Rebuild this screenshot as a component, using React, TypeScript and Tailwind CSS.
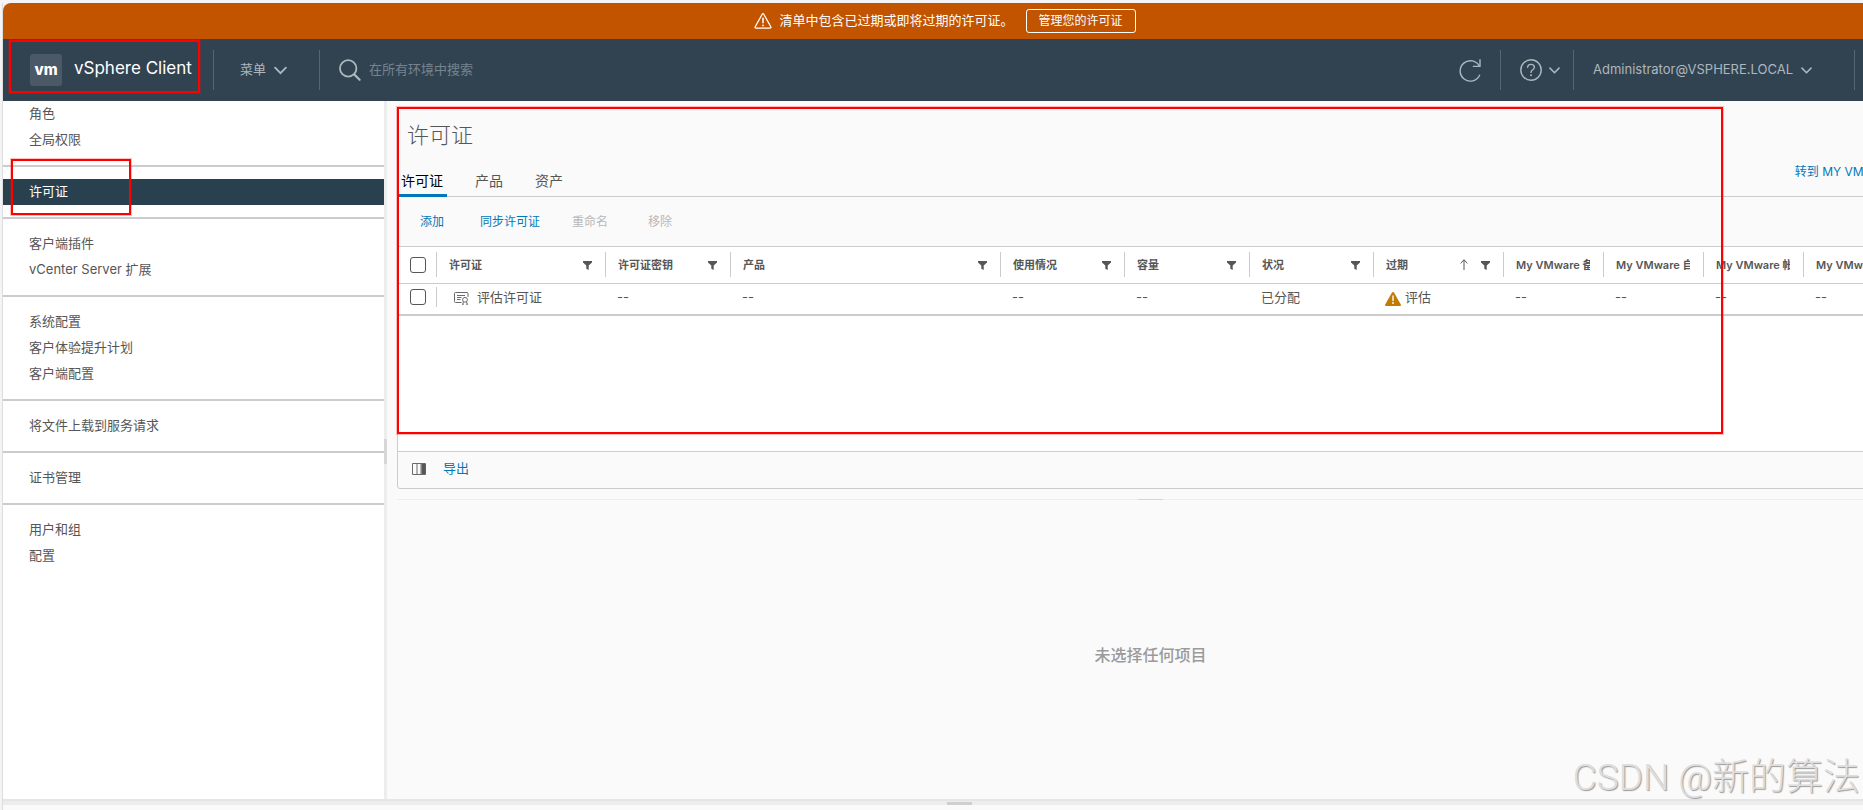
import React from "react";

const navGroups: { label: string; selected?: boolean }[][] = [
  [{ label: "角色" }, { label: "全局权限" }],
  [{ label: "许可证", selected: true }],
  [{ label: "客户端插件" }, { label: "vCenter Server 扩展" }],
  [{ label: "系统配置" }, { label: "客户体验提升计划" }, { label: "客户端配置" }],
  [{ label: "将文件上载到服务请求" }],
  [{ label: "证书管理" }],
  [{ label: "用户和组" }, { label: "配置" }],
];

const columns: { label: string; width: string; filter?: boolean; sorted?: boolean }[] = [
  { label: "许可证", width: "w-[169px]", filter: true },
  { label: "许可证密钥", width: "w-[125px]", filter: true },
  { label: "产品", width: "w-auto", filter: true },
  { label: "使用情况", width: "w-[124px]", filter: true },
  { label: "容量", width: "w-[125px]", filter: true },
  { label: "状况", width: "w-[124px]", filter: true },
  { label: "过期", width: "w-[130px]", filter: true, sorted: true },
  { label: "My VMware 备注", width: "w-[100px]" },
  { label: "My VMware 自定义标签", width: "w-[100px]" },
  { label: "My VMware 帐户", width: "w-[100px]" },
  { label: "My VMware", width: "w-[100px]" },
];

function Chevron({ className }: { className: string }) {
  return (
    <svg viewBox="0 0 14 9" className={className} fill="none" stroke="currentColor" strokeWidth="2" strokeLinecap="round" aria-hidden="true">
      <path d="M1.2 1.5 7 7.3l5.8-5.8" />
    </svg>
  );
}

function FilterIcon() {
  return (
    <svg viewBox="0 0 9 9" className="mt-0.5 h-[9px] w-[9px] fill-[#565656]" aria-hidden="true">
      <path d="M0 0h9v1.4L5.7 4.6V9L3.3 7.8V4.6L0 1.4z" />
    </svg>
  );
}

function WarningOutline() {
  return (
    <svg viewBox="0 0 18 16" className="h-4 w-[18px]" fill="none" stroke="currentColor" strokeWidth="1.3" strokeLinejoin="round" aria-hidden="true">
      <path d="M8.2 1.2a.9.9 0 0 1 1.6 0l7 12.6a.9.9 0 0 1-.8 1.4H2a.9.9 0 0 1-.8-1.4z" />
      <path d="M9 5.2v4.6" strokeWidth="1.5" strokeLinecap="round" />
      <circle cx="9" cy="12.4" r=".9" fill="currentColor" stroke="none" />
    </svg>
  );
}

function CheckBox({ label }: { label: string }) {
  return (
    <input
      type="checkbox"
      aria-label={label}
      className="block h-4 w-4 appearance-none rounded-[3px] border border-[#565656] bg-white checked:bg-[#0079b8]"
    />
  );
}

function Divider() {
  return <span className="h-10 w-px shrink-0 bg-[#566572]" />;
}

function Banner() {
  return (
    <div role="alert" className="flex h-9 shrink-0 items-center justify-center rounded-tl-lg bg-[#c25400] pl-6 text-white">
      <WarningOutline />
      <span className="ml-[7px] whitespace-nowrap pb-0.5 text-[13px] leading-5">清单中包含已过期或即将过期的许可证。</span>
      <button type="button" className="ml-3 h-6 whitespace-nowrap rounded-[3px] border border-white px-3 text-xs leading-5">
        管理您的许可证
      </button>
    </div>
  );
}

function Header() {
  return (
    <header className="flex h-[62px] shrink-0 items-center bg-[#314351] pr-2 text-[#adb7be]">
      <a href="#home" className="flex w-[210px] shrink-0 items-center gap-3 pl-[27px] text-white">
        <span className="flex h-8 w-8 items-center justify-center rounded-[3px] bg-[#4b5966] pb-0.5 text-[15px] leading-none font-extrabold">vm</span>
        <span className="whitespace-nowrap pb-0.5 text-[17px]">vSphere Client</span>
      </a>
      <Divider />
      <button type="button" className="flex w-[105px] shrink-0 items-center gap-2 pl-[26px] text-[13px]">
        菜单
        <Chevron className="h-[9px] w-[13px]" />
      </button>
      <Divider />
      <label className="flex min-w-0 flex-1 items-center gap-2 pl-[19px]">
        <svg viewBox="0 0 22 22" className="h-[22px] w-[22px] shrink-0" fill="none" stroke="currentColor" strokeWidth="1.8" strokeLinecap="round" aria-hidden="true">
          <circle cx="9.2" cy="9.4" r="8.2" />
          <path d="m15.2 15.4 5.4 5.4" strokeWidth="2.2" />
        </svg>
        <input
          type="search"
          aria-label="搜索"
          placeholder="在所有环境中搜索"
          className="w-full max-w-96 bg-transparent text-[13px] outline-none placeholder:text-[#768490]"
        />
      </label>
      <button type="button" aria-label="刷新" className="mr-[19px] shrink-0">
        <svg viewBox="0 0 22 23" className="h-[23px] w-[22px]" fill="none" stroke="currentColor" strokeWidth="1.4" strokeLinecap="round" strokeLinejoin="round" aria-hidden="true">
          <path d="M20.6 16.2A10.2 10.2 0 1 1 20.4 7.2" />
          <path d="M21 .8v6.6h-6.6" />
        </svg>
      </button>
      <Divider />
      <button type="button" aria-label="帮助" className="flex w-[72px] shrink-0 items-center gap-[7px] pl-[19px]">
        <svg viewBox="0 0 22 22" className="h-[22px] w-[22px]" fill="none" stroke="currentColor" strokeWidth="1.4" strokeLinecap="round" aria-hidden="true">
          <circle cx="11" cy="11" r="10.2" />
          <path d="M7.6 8.2C7.8 6.4 9.2 5.4 11 5.4c2 0 3.4 1.2 3.4 2.8 0 2.6-3.4 2.4-3.4 5.2" />
          <circle cx="11" cy="16.3" r="1" fill="currentColor" stroke="none" />
        </svg>
        <Chevron className="h-[7px] w-[11px]" />
      </button>
      <Divider />
      <button type="button" className="flex w-[280px] shrink-0 items-center gap-2 whitespace-nowrap pl-[19px] text-[13px]">
        Administrator@VSPHERE.LOCAL
        <Chevron className="h-[7px] w-[11px]" />
      </button>
      <Divider />
    </header>
  );
}

function Sidebar() {
  return (
    <nav aria-label="系统管理" className="w-[381px] shrink-0 bg-white text-[13px] leading-6 text-[#565656]">
      {navGroups.map((group, i) => (
        <ul key={i} className={i === 0 ? "pb-3" : "border-t-2 border-[#cccccc] py-3"}>
          {group.map((item) => (
            <li key={item.label}>
              <a
                href="#nav"
                aria-current={item.selected ? "page" : undefined}
                className={item.selected ? "block h-[26px] bg-[#29404e] pl-[26px] text-white" : "block h-[26px] pl-[26px]"}
              >
                {item.label}
              </a>
            </li>
          ))}
        </ul>
      ))}
    </nav>
  );
}

function LicenseTable() {
  return (
    <table className="w-full table-fixed border-collapse text-left">
      <thead>
        <tr className="h-9 border-b border-[#cccccc]">
          <th scope="col" className="w-[38px] p-0 pl-3">
            <CheckBox label="全选" />
          </th>
          {columns.map((c) => (
            <th key={c.label} scope="col" className={`${c.width} p-0 text-[11px] leading-4 font-semibold`}>
              <div className="flex h-[25px] items-center border-l border-[#cccccc] pl-3 pr-[13px]">
                <span className="flex-1 overflow-hidden whitespace-nowrap">{c.label}</span>
                {c.sorted && (
                  <svg viewBox="0 0 8 11" className="mr-[13px] h-[11px] w-2" fill="none" stroke="#565656" strokeWidth="1" aria-hidden="true">
                    <path d="M4 11V.8M.6 4.4 4 .8l3.4 3.6" />
                  </svg>
                )}
                {c.filter && (
                  <button type="button" aria-label={`筛选${c.label}`}>
                    <FilterIcon />
                  </button>
                )}
              </div>
            </th>
          ))}
        </tr>
      </thead>
      <tbody>
        <tr className="h-8 border-b-2 border-[#cccccc] text-[13px] leading-5">
          <td className="p-0 pb-1 pl-3">
            <CheckBox label="选择评估许可证" />
          </td>
          <td className="p-0 pb-1">
            <div className="flex h-5 items-center gap-2 border-l border-[#cccccc] pl-[17px]">
              <svg viewBox="0 0 15 13" className="mt-1 h-[13px] w-[15px]" fill="none" stroke="#6a6a6a" strokeWidth="1" aria-hidden="true">
                <path d="M7.5 10.5H1.5a1 1 0 0 1-1-1v-8a1 1 0 0 1 1-1h11.5a1 1 0 0 1 1 1V5M3 3.5h8M3 5.5h4.5M3 7.5h3.5" />
                <circle cx="11" cy="7.8" r="2.4" />
                <path d="m9.5 9.8-1 2.7 1.4-.4M12.5 9.8l1 2.7-1.4-.4" />
              </svg>
              评估许可证
            </div>
          </td>
          <td className="p-0 pb-1 pl-3">--</td>
          <td className="p-0 pb-1 pl-3">--</td>
          <td className="p-0 pb-1 pl-3">--</td>
          <td className="p-0 pb-1 pl-3">--</td>
          <td className="p-0 pb-1 pl-3">已分配</td>
          <td className="p-0 pb-1 pl-3">
            <div className="flex items-center gap-1">
              <svg viewBox="0 0 16 14" className="mt-1 h-[14px] w-4" aria-hidden="true">
                <path d="M7 .6a1.15 1.15 0 0 1 2 0l6.8 11.8A1.05 1.05 0 0 1 14.9 14H1.1a1.05 1.05 0 0 1-.9-1.6z" fill="#c27b00" />
                <path d="M8 4v4.5" stroke="#fff" strokeWidth="1.4" strokeLinecap="round" />
                <circle cx="8" cy="11" r=".9" fill="#fff" />
              </svg>
              评估
            </div>
          </td>
          <td className="p-0 pb-1 pl-3">--</td>
          <td className="p-0 pb-1 pl-3">--</td>
          <td className="p-0 pb-1 pl-3">--</td>
          <td className="p-0 pb-1 pl-3">--</td>
        </tr>
      </tbody>
    </table>
  );
}

function Licenses() {
  return (
    <main className="min-w-0 flex-1 overflow-hidden bg-[#fafafa] text-[#565656]">
      <div className="-mr-[41px] flex h-full flex-col pl-[10px]">
        <div className="flex items-center justify-between border-b border-[#cccccc]">
          <div className="-mb-px pt-[18px]">
            <h1 className="pl-[10px] text-[22px] leading-8 font-light">许可证</h1>
            <div role="tablist" className="mt-[10px] flex gap-6 text-sm leading-6">
              <button type="button" role="tab" aria-selected="true" className="h-9 border-b-[3px] border-[#0079b8] px-1 pt-[7px] text-black">许可证</button>
              <button type="button" role="tab" aria-selected="false" className="h-9 border-b-[3px] border-transparent px-1 pt-[7px]">产品</button>
              <button type="button" role="tab" aria-selected="false" className="h-9 border-b-[3px] border-transparent px-1 pt-[7px]">资产</button>
            </div>
          </div>
          <a href="#my-vmware" className="mt-[46px] whitespace-nowrap pr-1.5 text-xs text-[#0079b8]">转到 MY VMWARE</a>
        </div>
        <div role="toolbar" aria-label="许可证操作" className="flex h-[49px] items-center gap-9 pl-[23px] text-xs text-[#0079b8]">
          <button type="button">添加</button>
          <button type="button">同步许可证</button>
          <button type="button" disabled className="-ml-1 text-[#b8b8b8]">重命名</button>
          <button type="button" disabled className="ml-1 text-[#b8b8b8]">移除</button>
        </div>
        <section className="shrink-0 rounded-b-[3px] border border-[#cccccc]">
          <div className="min-h-[204px] bg-white">
            <LicenseTable />
          </div>
          <footer className="flex h-[37px] items-center gap-[17px] border-t border-[#cccccc] pb-0.5 pl-[14px]">
            <button type="button" aria-label="显示列">
              <svg viewBox="0 0 14 12" className="h-3 w-[14px]" aria-hidden="true">
                <path d="M.5.5h13v11H.5zM5 .5v11M9 .5v11" fill="none" stroke="#6a6a6a" />
                <path d="M9.5 1h4v10h-4z" fill="#565656" />
              </svg>
            </button>
            <button type="button" className="text-[13px] text-[#0079b8]">导出</button>
          </footer>
        </section>
        <div className="mt-[10px] flex h-px shrink-0 justify-center bg-[#eeeeee]">
          <span className="w-[25px] bg-[#d6d6d6]" />
        </div>
        <section className="flex min-h-20 flex-1 items-center justify-center pb-0.5 pt-3">
          <p className="text-base font-medium text-[#9a9a9a]">未选择任何项目</p>
        </section>
      </div>
    </main>
  );
}

export default function App() {
  return (
    <div className="relative flex min-h-screen flex-col overflow-hidden bg-[#f4f4f6] pl-0.5 pt-[3px] font-['Inter','Noto_Sans_CJK_SC',sans-serif]">
      <div className="flex flex-1 flex-col border-l border-[#dddddd]">
        <Banner />
        <Header />
        <div className="flex flex-1">
          <Sidebar />
          <div className="flex w-[3px] shrink-0 flex-col justify-center bg-[#ededed] pt-0.5">
            <span className="h-[25px] bg-[#d6d6d6]" />
          </div>
          <Licenses />
        </div>
        <div className="flex h-1.5 shrink-0 items-end justify-center border-t-2 border-t-[#e5e5e5] bg-[#ededed] pl-[52px]">
          <span className="h-[3px] w-[25px] bg-[#cfcfcf]" />
        </div>
        <div className="h-[5px] shrink-0 bg-[#fafafa]" />
      </div>

      {/* Callout frames laid over the page */}
      <div className="pointer-events-none absolute left-[9px] top-10 h-[53px] w-[191px] border-2 border-[#ff0000] ring-1 ring-[#ff0000]/25" />
      <div className="pointer-events-none absolute left-[11px] top-[159px] h-14 w-[120px] border-2 border-[#ff0000] ring-1 ring-[#ff0000]/25" />
      <div className="pointer-events-none absolute left-[397px] top-[107px] h-[327px] w-[1326px] border-2 border-[#ff0000] ring-1 ring-[#ff0000]/25" />

      <p className="pointer-events-none absolute bottom-3 right-[3px] whitespace-nowrap font-['Roboto','Noto_Sans_CJK_SC',sans-serif] text-[37px] leading-10 font-light text-[#dedede] [text-shadow:1px_1px_1px_#999999]">
        CSDN @新的算法
      </p>
    </div>
  );
}
